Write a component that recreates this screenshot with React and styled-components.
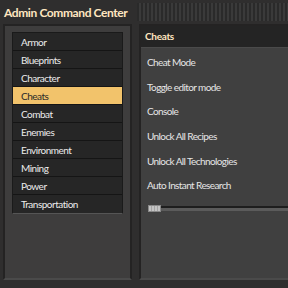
import React from 'react';
import styled, {createGlobalStyle} from 'styled-components';

const Global = createGlobalStyle`
  html, body {
    margin: 0;
    padding: 0;
    background: #2b2b2b;
  }
  body {
    font-family: Lato, "Open Sans", sans-serif;
  }
`;

const Window = styled.div`
  width: 288px;
  height: 288px;
  overflow: hidden;
  background: #2f2e2e;
  display: flex;
  flex-direction: column;
  padding: 0 0 0 3px;
  box-sizing: border-box;
`;

const TitleBar = styled.div`
  height: 24px;
  display: flex;
  align-items: center;
  gap: 10px;
`;

const Title = styled.div`
  font-weight: bold;
  font-size: 12px;
  letter-spacing: -0.4px;
  color: #ffe6c0;
  padding-left: 1px;
  white-space: nowrap;
`;

const DragHandle = styled.div`
  flex: 1;
  height: 18px;
  background: repeating-linear-gradient(90deg, #2a2a2a 0 2px, #3a3a3a 2px 4px);
`;

const Body = styled.div`
  display: flex;
  gap: 7px;
  height: 256px;
`;

const LeftPanel = styled.div`
  width: 129px;
  flex-shrink: 0;
  background: #3e3d3d;
  border: 2px solid #242323;
  border-bottom-color: #4a4a4a;
  box-sizing: border-box;
  padding: 6px 7px;
`;

const List = styled.ul`
  list-style: none;
  margin: 0;
  padding: 0;
  background: #232323;
  border: 1px solid #1a1a1a;
  border-bottom-color: #555;
`;

const Item = styled.li`
  height: 18px;
  line-height: 18px;
  padding-left: 8px;
  font-size: 10px;
  letter-spacing: -0.5px;
  color: ${p => (p.active ? '#2a2a2a' : '#ececec')};
  background: ${p => (p.active ? '#f2c36b' : '#262626')};
  border-bottom: 1px solid #151515;
  box-sizing: border-box;
  &:last-child {
    border-bottom: none;
  }
`;

const RightPanel = styled.div`
  flex: 1;
  display: flex;
  flex-direction: column;
  border: 2px solid #242323;
  border-right: none;
  border-bottom-color: #4a4a4a;
  background: #404040;
`;

const Header = styled.div`
  height: 21px;
  line-height: 21px;
  padding-left: 4px;
  background: #242424;
  border-bottom: 1px solid #4a4a4a;
  color: #ffe6c0;
  font-weight: bold;
  font-size: 10px;
  letter-spacing: -0.3px;
`;

const Content = styled.div`
  padding: 2px 0 0 6px;
  display: flex;
  flex-direction: column;
`;

const Row = styled.div`
  height: 24.6px;
  display: flex;
  align-items: center;
  font-size: 10px;
  letter-spacing: -0.6px;
  color: #e6e6e6;
`;

const Slider = styled.div`
  display: flex;
  align-items: center;
  height: 22px;
  padding-left: 1px;
`;

const Thumb = styled.div`
  width: 13px;
  height: 7px;
  background: repeating-linear-gradient(90deg, #c4c4c4 0 2px, #a4a4a4 2px 3px);
  border: 1px solid #888;
  box-sizing: border-box;
`;

const Track = styled.div`
  flex: 1;
  height: 3px;
  background: #5b5b5b;
  border-top: 2px solid #1e1e1e;
`;

const categories = [
    'Armor', 'Blueprints', 'Character', 'Cheats', 'Combat',
    'Enemies', 'Environment', 'Mining', 'Power', 'Transportation',
];

const cheats = [
    'Cheat Mode', 'Toggle editor mode', 'Console', 'Unlock All Recipes',
    'Unlock All Technologies', 'Auto Instant Research',
];

export default () => (
    <>
        <Global />
        <Window>
            <TitleBar>
                <Title>Admin Command Center</Title>
                <DragHandle />
            </TitleBar>
            <Body>
                <LeftPanel>
                    <List>
                        {categories.map(c => (
                            <Item key={ c } active={ c === 'Cheats' }>{c}</Item>
                        ))}
                    </List>
                </LeftPanel>
                <RightPanel>
                    <Header>Cheats</Header>
                    <Content>
                        {cheats.map(c => <Row key={ c }>{c}</Row>)}
                        <Slider>
                            <Thumb />
                            <Track />
                        </Slider>
                    </Content>
                </RightPanel>
            </Body>
        </Window>
    </>
);
